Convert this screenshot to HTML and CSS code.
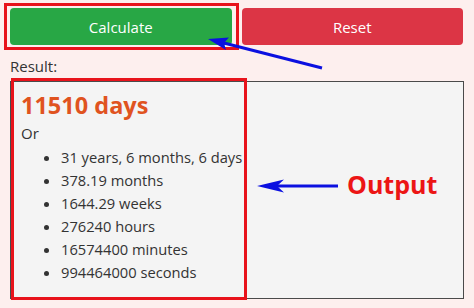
FILE: index.html
```html
<!DOCTYPE html>
<html>
<head>
<meta charset="utf-8">
<link rel="stylesheet" href="styles.css">
</head>
<body>
<div class="page">
  <div class="buttons">
    <button class="btn btn-calc">Calculate</button>
    <button class="btn btn-reset">Reset</button>
  </div>
  <div class="label">Result:</div>
  <div class="output">
    <div class="days">11510 days</div>
    <div class="or">Or</div>
    <ul class="list">
      <li>31 years, 6 months, 6 days</li>
      <li>378.19 months</li>
      <li>1644.29 weeks</li>
      <li>276240 hours</li>
      <li>16574400 minutes</li>
      <li>994464000 seconds</li>
    </ul>
  </div>
</div>
<svg class="overlay" width="474" height="308" viewBox="0 0 474 308">
  <rect x="5.5" y="4.5" width="232" height="44" fill="none" stroke="#e8131b" stroke-width="3"/>
  <rect x="12.5" y="79.5" width="233" height="219" fill="none" stroke="#e8131b" stroke-width="3"/>
  <line x1="322" y1="68" x2="220" y2="42" stroke="#0b10e0" stroke-width="3"/>
  <polygon points="208,39 229,37.5 224,43 226,50" fill="#0b10e0"/>
  <line x1="338" y1="186" x2="268" y2="186" stroke="#0b10e0" stroke-width="3"/>
  <polygon points="257,186 284,179.5 277,186 284,192.5" fill="#0b10e0"/>
  <text x="347" y="194" class="ann-text">Output</text>
</svg>
</body>
</html>
```
FILE: styles.css
```css
html, body {
  margin: 0;
  padding: 0;
}
body {
  background: #fdefee;
  font-family: "Open Sans", "Noto Sans", sans-serif;
  font-size: 15px;
  color: #333;
  width: 474px;
  height: 308px;
  overflow: hidden;
  position: relative;
}
.page {
  padding: 8px 10px 0 10px;
}
.buttons {
  display: flex;
  gap: 10px;
  width: 453px;
}
.btn {
  flex: 1;
  height: 37px;
  border: none;
  border-radius: 4px;
  color: #fff;
  font-family: "Open Sans", "Noto Sans", sans-serif;
  font-size: 15px;
  padding: 0;
}
.btn-calc {
  background: #28a745;
}
.btn-reset {
  background: #dc3545;
}
.label {
  margin-top: 10px;
  line-height: 23px;
  height: 23px;
  margin-bottom: 3px;
}
.output {
  box-sizing: border-box;
  width: 454px;
  height: 218px;
  border: 1px solid #4a4a4a;
  background: #f4f4f4;
  padding: 8px 9px 0 10px;
}
.days {
  font-size: 23.5px;
  font-weight: 700;
  line-height: 30px;
  color: #e0531f;
}
.or {
  margin-top: 2px;
  line-height: 23px;
}
.list {
  margin: 1px 0 0 0;
  padding-left: 40px;
  line-height: 23px;
  font-size: 14.7px;
}
.overlay {
  position: absolute;
  left: 0;
  top: 0;
  pointer-events: none;
}
.ann-text {
  font-family: "Open Sans", "Noto Sans", sans-serif;
  font-size: 25px;
  font-weight: 700;
  fill: #ec1515;
}
```
